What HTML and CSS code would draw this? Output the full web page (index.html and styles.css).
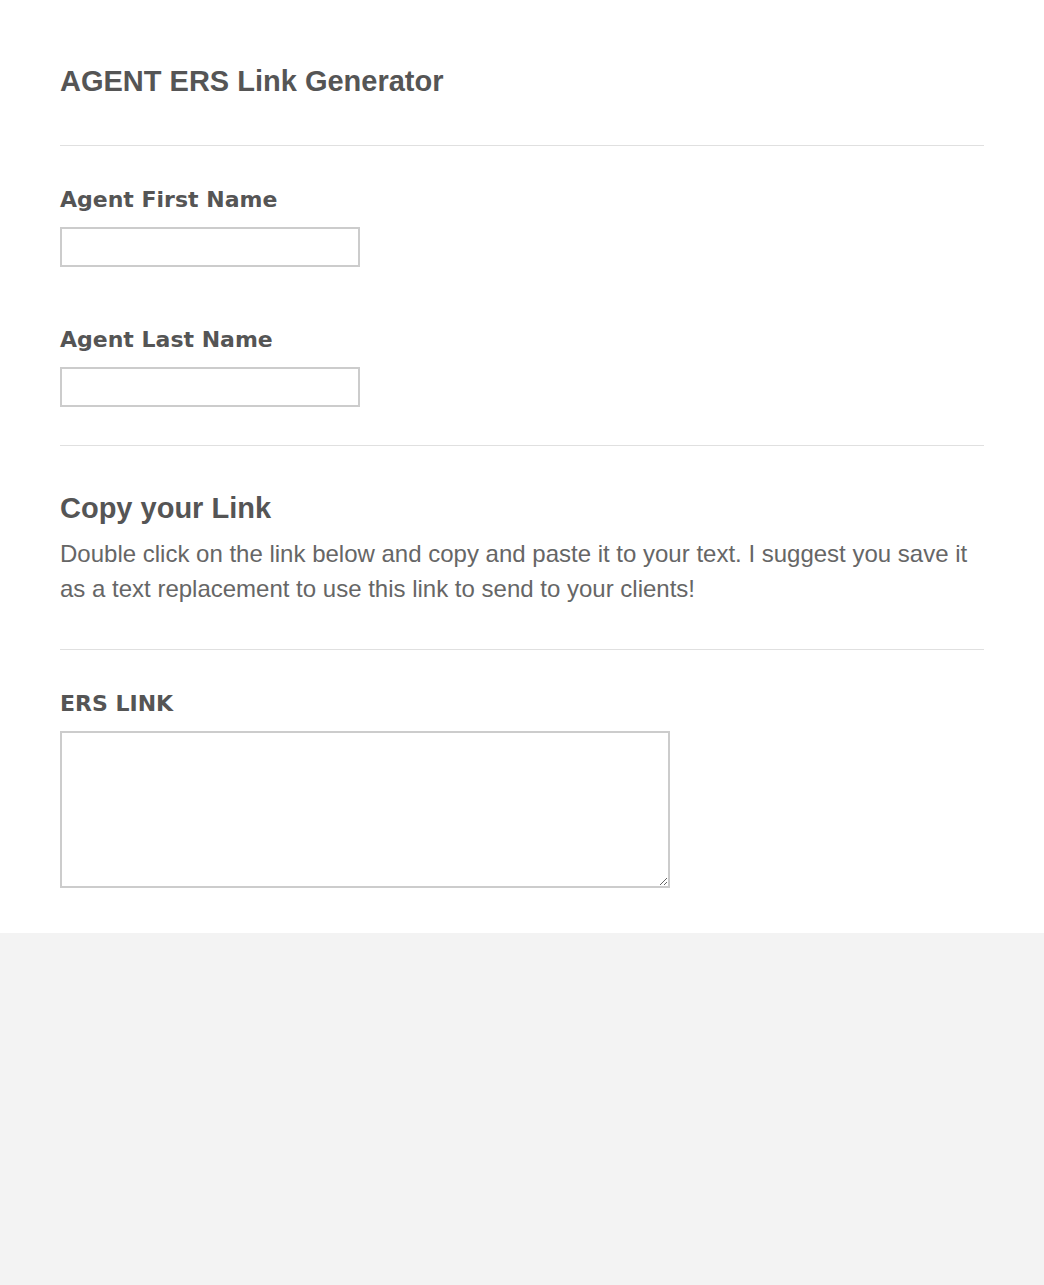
FILE: index.html
```html
<!DOCTYPE html>
<html lang="en">
<head>
<meta charset="utf-8">
<title>AGENT ERS Link Generator</title>
<link rel="stylesheet" href="styles.css">
</head>
<body>
<form class="card">
  <h1 class="title">AGENT ERS Link Generator</h1>
  <hr class="rule rule-head">
  <div class="field">
    <label class="label" for="first">Agent First Name</label>
    <input class="text-input" id="first" type="text">
  </div>
  <div class="field">
    <label class="label" for="last">Agent Last Name</label>
    <input class="text-input" id="last" type="text">
  </div>
  <hr class="rule">
  <section class="note">
    <h2 class="note-title">Copy your Link</h2>
    <p class="note-text">Double click on the link below and copy and paste it to your text. I suggest you save it as a text replacement to use this link to send to your clients!</p>
  </section>
  <hr class="rule">
  <div class="field">
    <label class="label" for="link">ERS LINK</label>
    <textarea class="text-area" id="link"></textarea>
  </div>
</form>
</body>
</html>
```
FILE: styles.css
```css
html, body {
  margin: 0;
  padding: 0;
  background: #f3f3f3;
}

body {
  font-family: "Liberation Sans", Arial, sans-serif;
  color: #555;
}

.card {
  background: #fff;
  padding: 60px 60px 45px;
  box-shadow: 0 6px 14px rgba(0, 0, 0, 0.13);
  display: flex;
  flex-direction: column;
}

.title {
  margin: 0;
  font-size: 29px;
  line-height: 42px;
  font-weight: bold;
  color: #555;
}

.rule {
  border: 0;
  border-top: 1px solid #e0e0e0;
  margin: 42px 0 0;
  height: 0;
}

.rule-head {
  margin-top: 43px;
}

.field {
  display: flex;
  flex-direction: column;
  align-items: flex-start;
  margin-top: 40px;
}

.field + .field {
  margin-top: 59px;
}

.field + .rule {
  margin-top: 38px;
}

.note + .rule {
  margin-top: 0;
}

.label {
  font-family: "DejaVu Sans", Verdana, sans-serif;
  font-weight: bold;
  font-size: 22px;
  line-height: 28px;
  color: #555;
  margin-bottom: 13px;
}

.text-input {
  box-sizing: border-box;
  width: 300px;
  height: 40px;
  border: 2px solid #ccc;
  border-radius: 0;
  padding: 4px 8px;
  font: 16px "Liberation Sans", Arial, sans-serif;
  background: #fff;
  margin: 0;
}

.text-area {
  box-sizing: border-box;
  width: 610px;
  height: 157px;
  border: 2px solid #ccc;
  border-radius: 0;
  padding: 6px 8px;
  font: 16px "Liberation Sans", Arial, sans-serif;
  background: #fff;
  margin: 0;
}

.note {
  margin-top: 42px;
  margin-bottom: 43px;
}

.note-title {
  margin: 0;
  font-size: 29px;
  line-height: 40px;
  font-weight: bold;
  color: #555;
}

.note-text {
  margin: 8px 0 0;
  font-size: 24px;
  line-height: 35px;
  color: #666;
}
```
